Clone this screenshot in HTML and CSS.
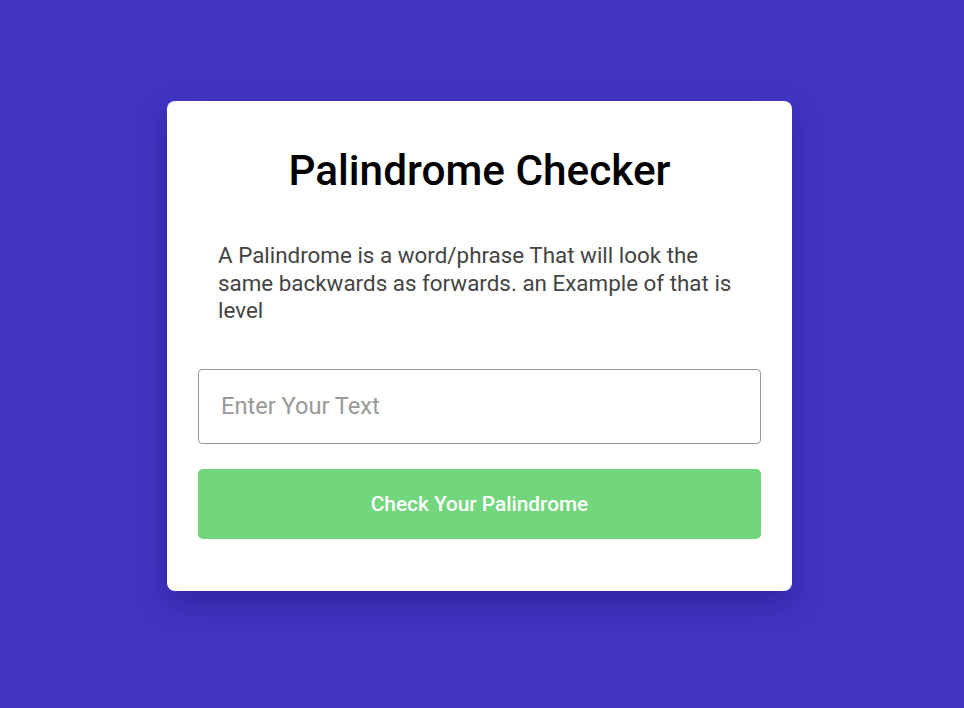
FILE: index.html
```html
<!DOCTYPE html>
<html lang="en">
<head>
<meta charset="utf-8">
<title>Palindrome Checker</title>
<link rel="stylesheet" href="styles.css">
</head>
<body>
  <main class="card">
    <h1 class="title">Palindrome Checker</h1>
    <p class="desc">A Palindrome is a word/phrase That will look the same backwards as forwards. an Example of that is level</p>
    <input class="field" type="text" placeholder="Enter Your Text">
    <button class="btn" type="button">Check Your Palindrome</button>
  </main>
</body>
</html>
```
FILE: styles.css
```css
* { box-sizing: border-box; }
html, body { margin: 0; height: 100%; }
body {
  background: #4135c4;
  font-family: Roboto, "Liberation Sans", sans-serif;
  display: flex;
  align-items: flex-start;
  justify-content: center;
  padding-top: 101px;
  padding-right: 5px;
}
.card {
  width: 625px;
  background: #fff;
  border-radius: 8px;
  padding: 31px 31px 52px;
  box-shadow: 0 12px 30px rgba(20, 10, 90, 0.35);
  display: flex;
  flex-direction: column;
}
.title {
  margin: 14px 0 0;
  text-align: center;
  font-size: 42.3px;
  font-weight: 500;
  color: #000;
}
.desc {
  margin: 47px 0 0;
  padding: 0 20px;
  font-size: 22.4px;
  line-height: 27.5px;
  color: #444;
}
.field {
  margin-top: 44px;
  height: 75px;
  border: 1px solid #999;
  border-radius: 4px;
  padding: 0 22px;
  font-family: inherit;
  font-size: 23.6px;
  color: #333;
  outline: none;
}
.field::placeholder { color: #999; }
.btn {
  margin-top: 25px;
  height: 70px;
  border: none;
  border-radius: 5px;
  background: #72d67c;
  color: #fff;
  font-family: inherit;
  font-size: 20.8px;
  font-weight: 500;
  cursor: pointer;
}
```
